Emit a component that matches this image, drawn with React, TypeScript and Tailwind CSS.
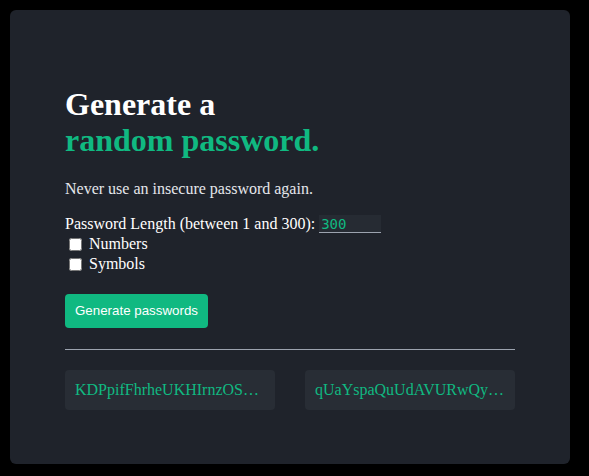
import React from "react";

export default function App() {
  const serif = { fontFamily: '"Liberation Serif", "Times New Roman", serif' };
  return (
    <div className="w-[589px] h-[476px] bg-black pt-[10px] pl-[10px]" style={serif}>
      <div className="w-[560px] h-[454px] bg-[#1f232b] rounded-[6px] px-[55px] pt-[76px] text-white">
        <h1 className="text-[32px] leading-[36px] font-bold text-white">
          Generate a
          <br />
          <span className="text-[#10b981]">random password.</span>
        </h1>
        <p className="mt-[22px] text-[16px] leading-[18px] text-[#e5e7eb]">
          Never use an insecure password again.
        </p>
        <div className="mt-[16px] text-[16px]">
          <div className="h-5 flex items-center">
            <span>Password Length (between 1 and 300):</span>
            <input
              type="text"
              defaultValue="300"
              className="ml-[4px] w-[62px] h-[18px] bg-[#262b33] border-b border-[#9ca3af] text-[#10b981] text-[14px] leading-[16px] px-[2px] outline-none"
              style={{ fontFamily: '"DejaVu Sans Mono", Consolas, monospace' }}
            />
          </div>
          <div className="h-5 flex items-center">
            <input type="checkbox" className="ml-[4px] mr-[7px] w-[13px] h-[13px]" />
            <span>Numbers</span>
          </div>
          <div className="h-5 flex items-center">
            <input type="checkbox" className="ml-[4px] mr-[7px] w-[13px] h-[13px]" />
            <span>Symbols</span>
          </div>
        </div>
        <button
          className="mt-5 h-[34px] w-[143px] bg-[#10b981] rounded-[4px] text-white text-[13.33px]"
          style={{ fontFamily: '"Liberation Sans", Arial, sans-serif' }}
        >
          Generate passwords
        </button>
        <div className="mt-[21px] h-px bg-[#9ca3af]" />
        <div className="mt-5 flex justify-between">
          <div className="w-[210px] h-10 bg-[#282d35] rounded-[4px] px-[10px] flex items-center">
            <span className="truncate text-[16px] text-[#10b981]">KDPpifFhrheUKHIrnzOSvbTqWmLxeAjYcRdNuPiG</span>
          </div>
          <div className="w-[210px] h-10 bg-[#282d35] rounded-[4px] px-[10px] flex items-center">
            <span className="truncate text-[16px] text-[#10b981]">qUaYspaQuUdAVURwQyHtbGkLmeNzXcPoiRsT</span>
          </div>
        </div>
      </div>
    </div>
  );
}
